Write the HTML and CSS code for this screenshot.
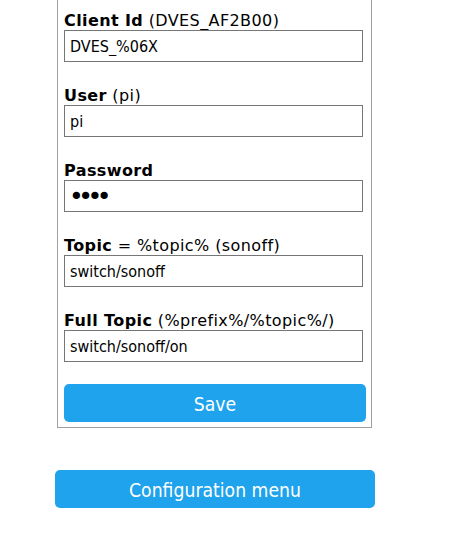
FILE: index.html
```html
<!DOCTYPE html>
<html>
<head>
<meta charset="utf-8">
<link rel="stylesheet" href="styles.css">
</head>
<body>
<div class="page">
  <form class="panel">
    <div class="field">
      <label class="lbl"><b>Client Id</b> (DVES_AF2B00)</label>
      <input class="inp" type="text" value="DVES_%06X">
    </div>
    <div class="field">
      <label class="lbl"><b>User</b> (pi)</label>
      <input class="inp" type="text" value="pi">
    </div>
    <div class="field">
      <label class="lbl"><b>Password</b></label>
      <input class="inp pw" type="password" value="1234">
    </div>
    <div class="field">
      <label class="lbl"><b>Topic</b> = %topic% (sonoff)</label>
      <input class="inp" type="text" value="switch/sonoff">
    </div>
    <div class="field">
      <label class="lbl"><b>Full Topic</b> (%prefix%/%topic%/)</label>
      <input class="inp" type="text" value="switch/sonoff/on">
    </div>
    <button type="button" class="btn save">Save</button>
  </form>
  <button type="button" class="btn menu">Configuration menu</button>
</div>
</body>
</html>
```

FILE: styles.css
```css
html, body {
  margin: 0;
  padding: 0;
  background: #fff;
}
body {
  font-family: "DejaVu Sans", Verdana, sans-serif;
  font-size: 16px;
  color: #000;
}
.page {
  width: 320px;
  margin-left: 55px;
  display: flex;
  flex-direction: column;
}
.panel {
  box-sizing: border-box;
  width: 315px;
  margin: 0 0 0 2px;
  border: 1px solid #a0a0a0;
  border-top: none;
  padding: 11px 5px 5px 6px;
  display: flex;
  flex-direction: column;
}
.field {
  display: flex;
  flex-direction: column;
  margin-bottom: 24px;
}
.field:last-of-type {
  margin-bottom: 22px;
}
.lbl {
  display: block;
  height: 19px;
  line-height: 19px;
  white-space: nowrap;
  letter-spacing: 0.4px;
}
.lbl b {
  font-weight: bold;
}
.inp {
  box-sizing: border-box;
  width: 299px;
  height: 32px;
  margin: 0;
  padding: 0 5px;
  border: 1px solid #767676;
  border-radius: 0;
  background: #fff;
  color: #000;
  font-family: "DejaVu Sans Condensed", "DejaVu Sans", sans-serif;
  font-stretch: condensed;
  font-size: 16px;
  outline: none;
}
.pw {
  font-family: "DejaVu Sans", sans-serif;
  font-stretch: normal;
  font-size: 25px;
  letter-spacing: -5.5px;
  padding-left: 4px;
}
.btn {
  display: block;
  box-sizing: border-box;
  border: 0;
  border-radius: 5px;
  background: #1fa3ec;
  color: #fff;
  height: 38px;
  line-height: 35px;
  padding: 3px 0 0;
  font-family: "DejaVu Sans Condensed", "DejaVu Sans", sans-serif;
  font-stretch: condensed;
  font-size: 19.2px;
  text-align: center;
  cursor: pointer;
}
.save {
  width: 302px;
}
.menu {
  width: 320px;
  margin-top: 42px;
}
```
